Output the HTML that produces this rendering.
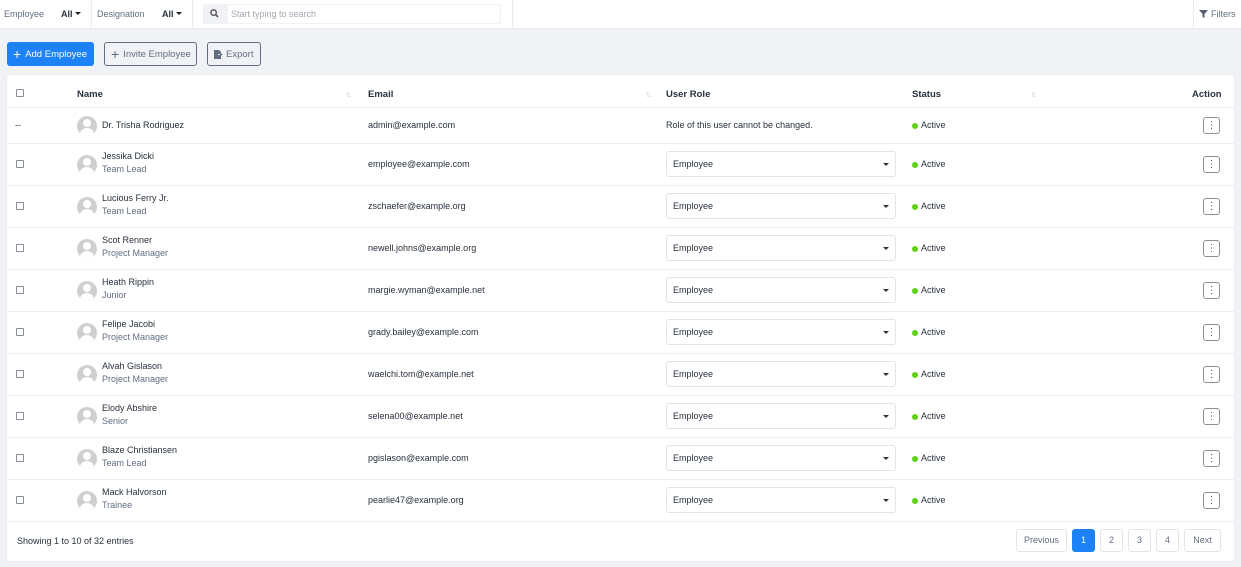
<!DOCTYPE html>
<html><head><meta charset="utf-8"><style>
*{box-sizing:border-box;margin:0;padding:0}
body{width:1241px;height:567px;background:#f1f2f6;font-family:"Liberation Sans",sans-serif;font-size:9px;color:#28313c;position:relative;overflow:hidden;white-space:nowrap}
.top{position:absolute;left:0;top:0;width:1241px;height:29px;background:#fff;border-bottom:1px solid #e8eaef}
.abs{position:absolute}
.vl{position:absolute;top:0;width:1px;height:29px;background:#e8eaef}
.btn{position:absolute;top:42px;height:24px;border-radius:3px;font-size:9.5px;display:flex;align-items:center;padding:0 6px;white-space:nowrap}
.card{position:absolute;left:7px;top:75px;width:1227px;height:486px;background:#fff;border-radius:3px;box-shadow:0 0 2px rgba(0,0,0,.06)}
.row{position:absolute;left:0;width:1227px;border-bottom:1px solid #eceef2}
.cb{position:absolute;left:9px;width:8px;height:8px;border:1px solid #8a8f98;border-radius:1px;background:#fff}
.av{position:absolute;left:70px;width:20px;height:20px;border-radius:50%;background:#cfcfd1;overflow:hidden}
.av:before{content:"";position:absolute;left:6px;top:3px;width:8px;height:8px;border-radius:50%;background:#fff}
.av:after{content:"";position:absolute;left:3px;top:12px;width:14px;height:12px;border-radius:50%;background:#fff}
.sel{position:absolute;left:659px;width:230px;height:26px;border:1px solid #e1e4ea;border-radius:3px;padding-left:6px;line-height:24px}
.sel:after{content:"";position:absolute;right:6px;top:11px;border-left:3px solid transparent;border-right:3px solid transparent;border-top:3px solid #333}
.st{position:absolute;left:905px}
.st:before{content:"";display:inline-block;width:6px;height:6px;border-radius:50%;background:#5ed116;margin-right:3px;vertical-align:-0.5px}
.act{position:absolute;left:1196px;width:17px;height:17px;border:1px solid #8a8f98;border-radius:3px}
.act:before{content:"⋮";position:absolute;left:0;width:15px;top:1px;text-align:center;font-size:10px;color:#555;line-height:13px}
.th{position:absolute;font-weight:bold;font-size:9.5px}
.so{position:absolute;color:#c4c8cf;font-size:9px;letter-spacing:-2px}
.pg{position:absolute;top:454px;height:23px;border:1px solid #e1e4ea;border-radius:3px;text-align:center;line-height:21px;color:#616e80}
.sub{color:#616e80}
</style></head><body>
<div class="top">
<div class="abs" style="left:4px;top:9px;color:#616e80">Employee</div>
<div class="abs" style="left:61px;top:9px;font-weight:bold">All<span style="display:inline-block;border-left:3px solid transparent;border-right:3px solid transparent;border-top:3px solid #222;margin-left:2px;vertical-align:2px"></span></div>
<div class="vl" style="left:91px"></div>
<div class="abs" style="left:97px;top:9px;color:#616e80">Designation</div>
<div class="abs" style="left:162px;top:9px;font-weight:bold">All<span style="display:inline-block;border-left:3px solid transparent;border-right:3px solid transparent;border-top:3px solid #222;margin-left:2px;vertical-align:2px"></span></div>
<div class="vl" style="left:192px"></div>
<div class="abs" style="left:203px;top:4px;width:298px;height:20px;background:#f1f2f6;border-radius:2px"></div>
<div class="abs" style="left:228px;top:5px;width:272px;height:18px;background:#fff;border-radius:2px;color:#a3a8b2;padding:4px 3px">Start typing to search</div>
<svg class="abs" style="left:210px;top:9px" width="9" height="9" viewBox="0 0 10 10"><circle cx="4" cy="4" r="3" fill="none" stroke="#555" stroke-width="1.6"/><path d="M6 6l3 3" stroke="#555" stroke-width="1.8"/></svg>
<div class="vl" style="left:512px"></div>
<div class="vl" style="left:1193px"></div>
<svg class="abs" style="left:1199px;top:10px" width="9" height="8" viewBox="0 0 9 8"><path d="M0 0h9L5.5 4v4L3.5 7V4z" fill="#5a6270"/></svg>
<div class="abs" style="left:1211px;top:9px;color:#616e80">Filters</div>
</div>
<div class="btn" style="left:7px;width:87px;background:#1d82f5;color:#fff"><span style="font-size:14px;margin-right:4px;line-height:10px">+</span>Add Employee</div>
<div class="btn" style="left:104px;width:93px;border:1px solid #616e80;color:#616e80"><span style="font-size:14px;margin-right:4px;line-height:10px">+</span>Invite Employee</div>
<div class="btn" style="left:207px;width:54px;border:1px solid #616e80;color:#616e80;padding:0 6px"><svg width="10" height="9" viewBox="0 0 10 9" style="margin-right:2px"><path d="M0 0h5l2 2v2H4v1h3v4H0z" fill="#616e80"/><path d="M6 3l3 1.5-3 1.5z" fill="#616e80"/></svg>Export</div>
<div class="card">
<div class="row" style="top:5px;height:28px">
<div class="cb" style="top:9px"></div>
<div class="th" style="left:70px;top:9px">Name</div><div class="so" style="left:338px;top:9px">↑↓</div>
<div class="th" style="left:361px;top:9px">Email</div><div class="so" style="left:638px;top:9px">↑↓</div>
<div class="th" style="left:659px;top:9px">User Role</div>
<div class="th" style="left:905px;top:9px">Status</div><div class="so" style="left:1023px;top:9px">↑↓</div>
<div class="th" style="left:1185px;top:9px">Action</div>
</div>
<div class="row" style="top:33px;height:36px">
<div class="abs" style="left:8px;top:12px">--</div>
<div class="av" style="top:8px"></div>
<div class="abs" style="left:95px;top:12px">Dr. Trisha Rodriguez</div>
<div class="abs" style="left:361px;top:12px">admin@example.com</div>
<div class="abs" style="left:659px;top:12px">Role of this user cannot be changed.</div>
<div class="st" style="top:12px">Active</div>
<div class="act" style="top:9px"></div>
</div>
<div id="rows"></div>
<div class="abs" style="left:10px;top:461px">Showing 1 to 10 of 32 entries</div>
<div class="pg" style="left:1009px;width:51px">Previous</div>
<div class="pg" style="left:1065px;width:23px;background:#1d82f5;border-color:#1d82f5;color:#fff">1</div>
<div class="pg" style="left:1093px;width:23px">2</div>
<div class="pg" style="left:1121px;width:23px">3</div>
<div class="pg" style="left:1149px;width:23px">4</div>
<div class="pg" style="left:1177px;width:37px">Next</div>
</div>
<script>
var d=[["Jessika Dicki","Team Lead","employee@example.com"],["Lucious Ferry Jr.","Team Lead","zschaefer@example.org"],["Scot Renner","Project Manager","newell.johns@example.org"],["Heath Rippin","Junior","margie.wyman@example.net"],["Felipe Jacobi","Project Manager","grady.bailey@example.com"],["Alvah Gislason","Project Manager","waelchi.tom@example.net"],["Elody Abshire","Senior","selena00@example.net"],["Blaze Christiansen","Team Lead","pgislason@example.com"],["Mack Halvorson","Trainee","pearlie47@example.org"]];
var h="";d.forEach(function(r,i){var t=69+i*42;h+='<div class="row" style="top:'+t+'px;height:42px"><div class="cb" style="top:16px"></div><div class="av" style="top:11px"></div><div class="abs" style="left:95px;top:7px">'+r[0]+'</div><div class="abs sub" style="left:95px;top:20px">'+r[1]+'</div><div class="abs" style="left:361px;top:15px">'+r[2]+'</div><div class="sel" style="top:7px">Employee</div><div class="st" style="top:15px">Active</div><div class="act" style="top:12px"></div></div>';});
document.getElementById("rows").outerHTML=h;
</script>
</body></html>
